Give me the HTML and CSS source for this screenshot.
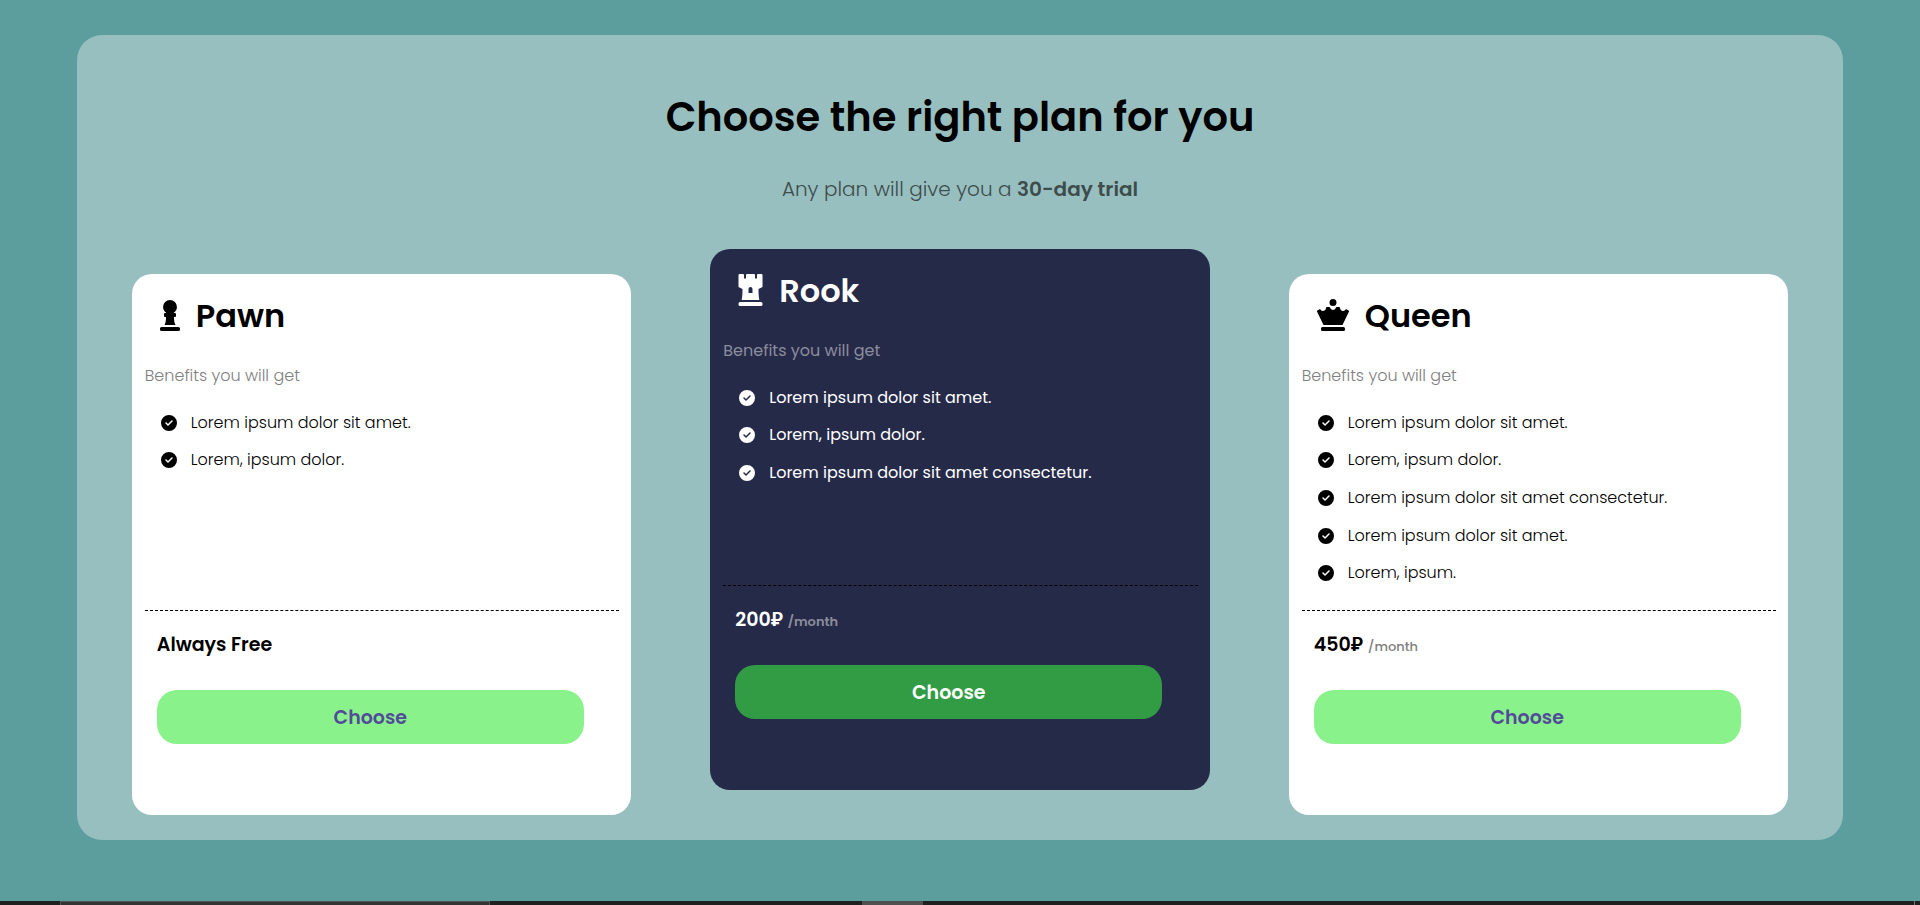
FILE: index.html
```html
<!DOCTYPE html>
<html lang="en">

<head>
    <meta charset="UTF-8">
    <meta name="viewport" content="width=device-width, initial-scale=1.0">
    <title>Pricing plans</title>
    <link rel="stylesheet" href="styles.css">
</head>

<body>
    <!-- shared icons -->
    <svg class="sprite" aria-hidden="true">
        <symbol id="check" viewBox="0 0 512 512">
            <path d="M256 512A256 256 0 1 0 256 0a256 256 0 1 0 0 512zM369 209L241 337c-9.4 9.4-24.6 9.4-33.9 0l-64-64c-9.4-9.4-9.4-24.6 0-33.9s24.6-9.4 33.9 0l47 47L335 175c9.4-9.4 24.6-9.4 33.9 0s9.4 24.6 0 33.9z" />
        </symbol>
    </svg>

    <main class="container">
        <h1 class="title">Choose the right plan for you</h1>
        <p class="subtitle">Any plan will give you a <b>30-day trial</b></p>

        <div class="cards">
            <!-- Pawn -->
            <section class="card">
                <h2 class="card-title">
                    <svg class="icon icon-pawn" viewBox="0 0 320 512" aria-hidden="true">
                        <path d="M105.1 224H80a16 16 0 0 0-16 16v32a16 16 0 0 0 16 16h16v5.5c0 44-4.1 86.6-24 122.5h176c-19.9-35.9-24-78.5-24-122.5V288h16a16 16 0 0 0 16-16v-32a16 16 0 0 0-16-16h-25.1c32-18 56-53 56-96a111 112 0 1 0-222 0c0 43 24 78 56.2 96zM296 448H24a24 24 0 0 0-24 24v16a24 24 0 0 0 24 24h272a24 24 0 0 0 24-24v-16a24 24 0 0 0-24-24z" />
                    </svg>
                    Pawn
                </h2>
                <p class="benefits">Benefits you will get</p>
                <ul class="list">
                    <li><svg class="check"><use href="#check" /></svg>Lorem ipsum dolor sit amet.</li>
                    <li><svg class="check"><use href="#check" /></svg>Lorem, ipsum dolor.</li>
                </ul>
                <p class="price">Always Free</p>
                <button class="btn" type="button">Choose</button>
            </section>

            <!-- Rook -->
            <section class="card card-active">
                <h2 class="card-title">
                    <svg class="icon icon-rook" viewBox="0 0 384 512" aria-hidden="true">
                        <path d="M368 0h-56a16 16 0 0 0-16 16v56h-32V16a16 16 0 0 0-16-16H136a16 16 0 0 0-16 16v56H88V16a16 16 0 0 0-16-16H16A16 16 0 0 0 0 16v192l64 32c0 60-1.5 116-13.2 176h282.4C321.5 356 320 300 320 240l64-32V16a16 16 0 0 0-16-16zM224 304h-64v-64a32 32 0 0 1 64 0zM360 448H24a24 24 0 0 0-24 24v16a24 24 0 0 0 24 24h336a24 24 0 0 0 24-24v-16a24 24 0 0 0-24-24z" />
                    </svg>
                    Rook
                </h2>
                <p class="benefits">Benefits you will get</p>
                <ul class="list">
                    <li><svg class="check"><use href="#check" /></svg>Lorem ipsum dolor sit amet.</li>
                    <li><svg class="check"><use href="#check" /></svg>Lorem, ipsum dolor.</li>
                    <li><svg class="check"><use href="#check" /></svg>Lorem ipsum dolor sit amet consectetur.</li>
                </ul>
                <p class="price">200₽ <span class="month">/month</span></p>
                <button class="btn" type="button">Choose</button>
            </section>

            <!-- Queen -->
            <section class="card">
                <h2 class="card-title">
                    <svg class="icon icon-queen" viewBox="0 0 512 512" aria-hidden="true">
                        <path d="M256 112a56 56 0 1 0-56-56 56 56 0 0 0 56 56zm168 336H88a24 24 0 0 0-24 24v16a24 24 0 0 0 24 24h336a24 24 0 0 0 24-24v-16a24 24 0 0 0-24-24zm80.87-263.84l-28.51-15.92c-7.44-5-16.91-2.46-22.29 4.68a47.59 47.59 0 0 1-47.23 18.23C383.7 186.86 368 164.93 368 141.4a13.4 13.4 0 0 0-13.4-13.4h-38.77c-6 0-11.61 4-12.86 9.91a48 48 0 0 1-93.94 0c-1.23-5.92-6.82-9.91-12.86-9.91H157.4a13.4 13.4 0 0 0-13.4 13.4c0 25.69-19 48.75-44.67 50.49a47.5 47.5 0 0 1-41.54-19.15c-5.28-7.09-14.73-9.45-22.09-4.54l-28.57 16a16 16 0 0 0-5.44 20.47L104.24 416h303.52l102.55-211.37a16 16 0 0 0-5.44-20.47z" />
                    </svg>
                    Queen
                </h2>
                <p class="benefits">Benefits you will get</p>
                <ul class="list">
                    <li><svg class="check"><use href="#check" /></svg>Lorem ipsum dolor sit amet.</li>
                    <li><svg class="check"><use href="#check" /></svg>Lorem, ipsum dolor.</li>
                    <li><svg class="check"><use href="#check" /></svg>Lorem ipsum dolor sit amet consectetur.</li>
                    <li><svg class="check"><use href="#check" /></svg>Lorem ipsum dolor sit amet.</li>
                    <li><svg class="check"><use href="#check" /></svg>Lorem, ipsum.</li>
                </ul>
                <p class="price">450₽ <span class="month">/month</span></p>
                <button class="btn" type="button">Choose</button>
            </section>
        </div>
    </main>

    <!-- bottom bar -->
    <div class="bar">
        <span class="bar-search"></span>
        <span class="bar-item"></span>
        <span class="bar-end"></span>
    </div>
</body>

</html>
```

FILE: styles.css
```css
* {
    margin: 0;
    padding: 0;
    box-sizing: border-box;
}

body {
    display: flex;
    flex-direction: column;
    min-height: 100vh;
    padding-top: 35px;
    background-color: #5c9e9d;
    font-family: Poppins, "DejaVu Sans", sans-serif;
    font-size: 16px;
    line-height: 24px;
    color: #000;
}

.sprite {
    display: none;
}

.container {
    width: 92%;
    margin: 0 auto;
    padding: 52px 55px 25px;
    border-radius: 25px;
    background-color: #98bfbf;
}

.title {
    font-size: 40px;
    font-weight: 600;
    line-height: 60px;
    text-align: center;
}

.subtitle {
    margin-top: 27px;
    font-size: 20px;
    font-weight: 300;
    line-height: 30px;
    text-align: center;
    color: #3d4c4c;
}

.subtitle b {
    font-weight: 600;
}

.cards {
    display: grid;
    grid-template-columns: repeat(3, 1fr);
    gap: 79px;
    margin-top: 70px;
}

.card {
    padding: 22px 12px 71px 13px;
    border-radius: 20px;
    background-color: #fff;
}

.card-title {
    display: flex;
    align-items: center;
    gap: 16px;
    padding-left: 15px;
    font-size: 32px;
    font-weight: 600;
    line-height: 40px;
}

.icon {
    height: 32px;
    margin-bottom: 2px;
    fill: currentColor;
}

.icon-pawn {
    width: 20px;
}

.icon-rook {
    width: 25px;
}

.icon-queen {
    width: 32px;
}

.benefits {
    margin-top: 28px;
    font-weight: 300;
    color: #808080;
}

/* room for five rows in every card */
.list {
    display: grid;
    grid-template-rows: repeat(5, 1fr);
    height: 188px;
    margin-top: 16px;
    padding-left: 16px;
    font-weight: 300;
    list-style: none;
}

.list li {
    display: flex;
    align-items: center;
    gap: 14px;
}

.check {
    width: 16px;
    height: 16px;
    fill: currentColor;
}

.price {
    height: 49px;
    margin-top: 18px;
    padding: 19px 12px 0;
    border-top: 1px dashed #000;
    font-size: 19px;
    font-weight: 600;
    line-height: 30px;
}

.month {
    font-size: 13px;
    font-weight: 500;
    color: #808080;
}

.btn {
    display: block;
    width: 90%;
    height: 54px;
    margin: 31px 0 0 12px;
    border: none;
    border-radius: 20px;
    background-color: #89f28b;
    font-family: inherit;
    font-size: 19px;
    font-weight: 600;
    color: #534b99;
    cursor: pointer;
}

/* highlighted plan */
.card-active {
    margin: -25px 0 25px;
    background-color: #262a49;
    color: #fff;
}

.card-active .benefits,
.card-active .month {
    color: #8b8d9c;
}

.card-active .benefits,
.card-active .list {
    font-weight: 400;
}

.card-active .month {
    font-weight: 600;
}

.card-active .btn {
    background-color: #329c45;
    color: #fff;
}

/* bottom bar */
.bar {
    display: flex;
    height: 4px;
    margin-top: auto;
    padding: 0 5px 0 60px;
    background-color: #202020;
}

.bar-search {
    width: 430px;
    border: 1px solid #555;
    border-bottom: none;
    background-color: #333;
}

.bar-item {
    width: 61px;
    margin-left: 372px;
    background-color: #505050;
}

.bar-end {
    width: 1px;
    margin-left: auto;
    background-color: #777;
}
```
